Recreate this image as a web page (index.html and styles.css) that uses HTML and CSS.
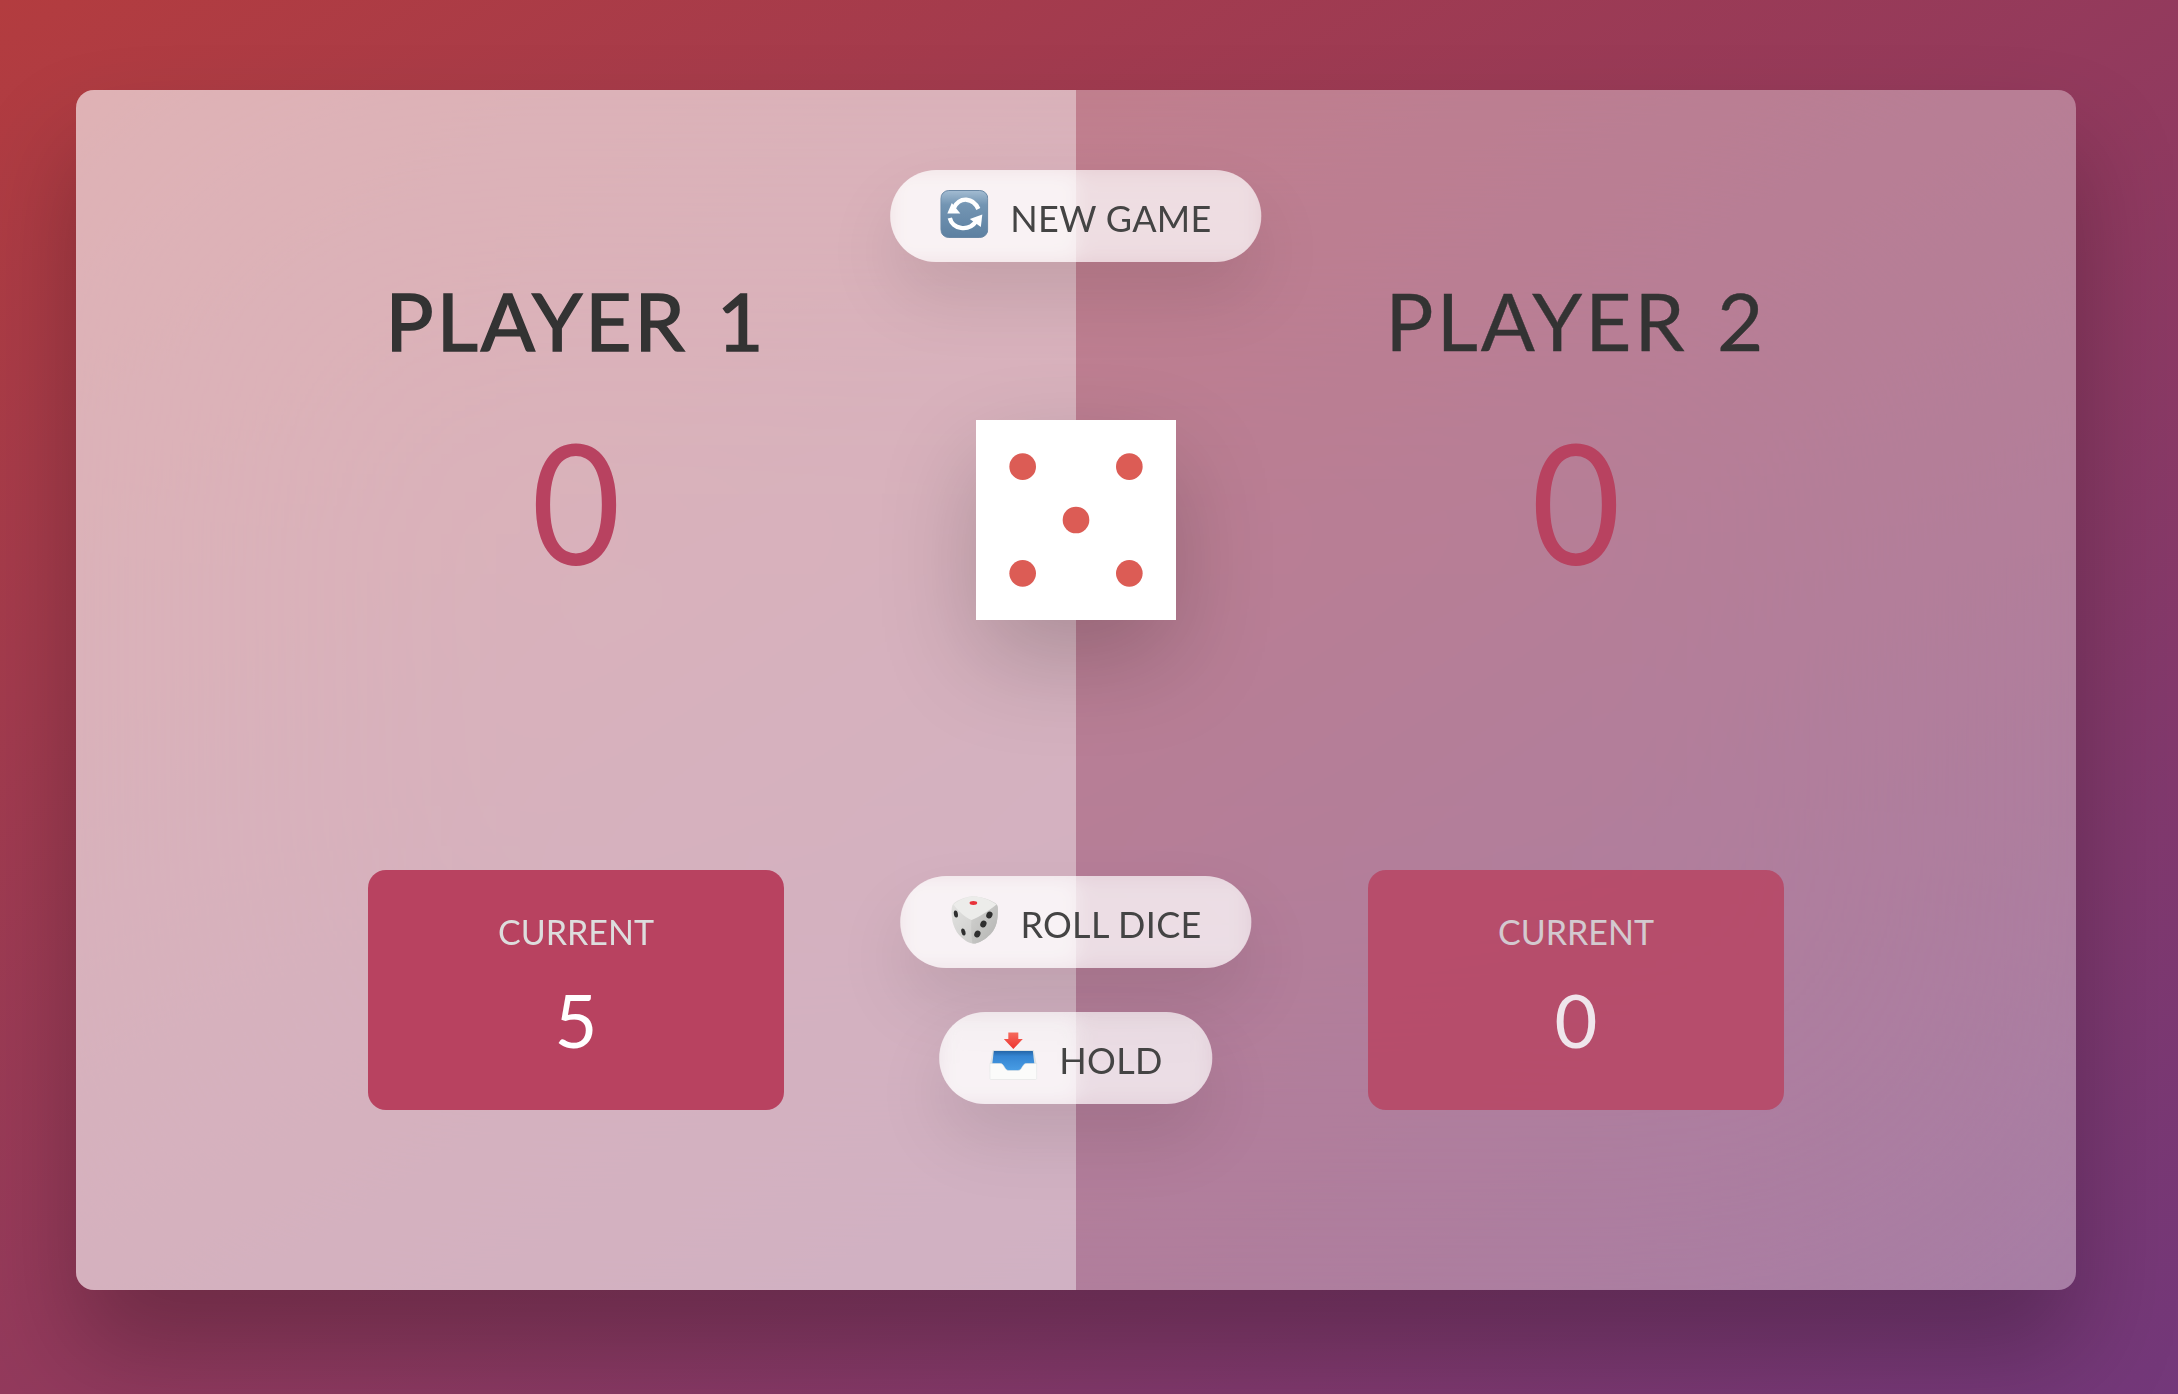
FILE: index.html
```html
<!DOCTYPE html>
<html lang="en">
<head>
  <meta charset="UTF-8" />
  <meta name="viewport" content="width=device-width, initial-scale=1.0" />
  <title>Pig Game</title>
  <link rel="stylesheet" href="styles.css">
</head>
<body>
  <main class="game">
    <section class="player player-active">
      <h2 class="name">Player 1</h2>
      <p class="score">0</p>
      <div class="current">
        <p class="current-label">Current</p>
        <p class="current-score">5</p>
      </div>
    </section>
    <section class="player">
      <h2 class="name">Player 2</h2>
      <p class="score">0</p>
      <div class="current">
        <p class="current-label">Current</p>
        <p class="current-score">0</p>
      </div>
    </section>

    <svg class="dice" viewBox="0 0 200 200" role="img" aria-label="Dice showing five">
      <rect width="200" height="200" fill="#fff" />
      <g fill="#dc5c55">
        <circle cx="46.67" cy="46.67" r="13.33" />
        <circle cx="153.33" cy="46.67" r="13.33" />
        <circle cx="100" cy="100" r="13.33" />
        <circle cx="46.67" cy="153.33" r="13.33" />
        <circle cx="153.33" cy="153.33" r="13.33" />
      </g>
    </svg>

    <button class="btn btn-new">
      <svg class="btn-icon" viewBox="0 0 48 48">
        <defs>
          <linearGradient id="refreshBg" x1="0" y1="0" x2="0" y2="1">
            <stop offset="0" stop-color="#a3bcd2" />
            <stop offset="0.3" stop-color="#7395b3" />
            <stop offset="1" stop-color="#5d80a1" />
          </linearGradient>
        </defs>
        <rect x="0.5" y="0.5" width="47" height="47" rx="8" fill="url(#refreshBg)" stroke="#6a88a5" />
        <path d="M38 19C33 7.5 19.5 6 13.5 18" fill="none" stroke="#fff" stroke-width="4.4" />
        <path d="M11.5 13L7 23.5L20 23.5Z" fill="#fff" />
        <path d="M9.5 28C12 39 28 42.5 36 31" fill="none" stroke="#fff" stroke-width="4.4" />
        <path d="M42 24.5L40.5 37L29.5 29Z" fill="#fff" />
      </svg>
      <span>New game</span>
    </button>

    <button class="btn btn-roll">
      <svg class="btn-icon" viewBox="0 0 48 48">
        <defs>
          <linearGradient id="dieLeft" x1="0" y1="0" x2="1" y2="1">
            <stop offset="0" stop-color="#e4e4e2" />
            <stop offset="1" stop-color="#c6c6c4" />
          </linearGradient>
          <linearGradient id="dieRight" x1="0" y1="0" x2="1" y2="1">
            <stop offset="0" stop-color="#d2d2d0" />
            <stop offset="1" stop-color="#b4b4b2" />
          </linearGradient>
        </defs>
        <path d="M5 6C12 2 17 0.5 23 0.5C30 0.5 38 3 44 6.5C47 8 47.5 10 47.5 14C47.5 24 46 31 42 36C37 42 31 46 25 47.5C21 48 18 47 13 43C8 39 4 34 2 25C1 19 1 14 1.5 11C2 9 3 7 5 6Z" fill="url(#dieLeft)" />
        <path d="M46 8.5C47.5 10 47.5 11 47.5 14C47.5 24 46 31 42 36C37 42 31 46 25 47.5L22 47.5C21 40 20.5 33 21 24C29 20 38 14 46 8.5Z" fill="url(#dieRight)" />
        <path d="M3 8.5C10 3 17 0.5 23 0.5C31 0.5 39 3.5 46 8.5C38 15 29 21 21 24C14 21 8 15 3 8.5Z" fill="#ececea" />
        <ellipse cx="23" cy="7" rx="3.8" ry="1.9" fill="#e8333a" />
        <g fill="#2f2f2f">
          <ellipse cx="5.5" cy="18" rx="2" ry="3.6" transform="rotate(-10 5.5 18)" />
          <ellipse cx="13" cy="36" rx="2" ry="3.6" transform="rotate(-15 13 36)" />
          <ellipse cx="39" cy="19" rx="3" ry="3.6" transform="rotate(25 39 19)" />
          <ellipse cx="33" cy="28" rx="3" ry="3.6" transform="rotate(25 33 28)" />
          <ellipse cx="27" cy="38" rx="3" ry="3.6" transform="rotate(25 27 38)" />
        </g>
      </svg>
      <span>Roll dice</span>
    </button>

    <button class="btn btn-hold">
      <svg class="btn-icon" viewBox="0 0 48 48">
        <defs>
          <linearGradient id="trayBlue" x1="0" y1="0" x2="0" y2="1">
            <stop offset="0" stop-color="#2566a8" />
            <stop offset="0.25" stop-color="#3585d2" />
            <stop offset="1" stop-color="#4a9fe6" />
          </linearGradient>
          <linearGradient id="arrowRed" x1="0" y1="0" x2="0" y2="1">
            <stop offset="0" stop-color="#f56a5c" />
            <stop offset="1" stop-color="#ee3230" />
          </linearGradient>
        </defs>
        <path d="M19 0.5H29V7H33.5L24 17L14.5 7H19Z" fill="url(#arrowRed)" />
        <path d="M3.5 18H44.5L47.5 33V40H0.5V33Z" fill="#dfe3e4" />
        <path d="M4.5 19H43.5L46 40H2Z" fill="url(#trayBlue)" />
        <path d="M0.5 31.5H11C15 31.5 15 38.5 19.5 38.5H28.5C33 38.5 33 31.5 37 31.5H47.5V46C47.5 47 47 47.5 46 47.5H2C1 47.5 0.5 47 0.5 46Z" fill="#fbfbfa" stroke="#dfe2e2" stroke-width="0.6" />
      </svg>
      <span>Hold</span>
    </button>
  </main>
</body>
</html>
```

FILE: styles.css
```css
* {
  margin: 0;
  padding: 0;
  box-sizing: border-box;
}

body {
  height: 100vh;
  overflow: hidden;
  padding: 90px 0 0 76px;
  font-family: Lato, "Noto Sans", sans-serif;
  background-image: linear-gradient(to top left, #73387a 0%, #b33c3f 100%);
  color: #333;
}

.game {
  position: relative;
  display: flex;
  width: 2000px;
  height: 1200px;
  overflow: hidden;
  border-radius: 18px;
  background: rgba(255, 255, 255, 0.35);
  backdrop-filter: blur(200px);
  box-shadow: 0 60px 100px rgba(0, 0, 0, 0.25);
}

.player {
  flex: 1;
  display: flex;
  flex-direction: column;
  align-items: center;
  padding: 180px;
}

.player-active {
  background: rgba(255, 255, 255, 0.4);
}

.name {
  margin-bottom: 29px;
  font-size: 80px;
  line-height: 100px;
  font-weight: 400;
  letter-spacing: 3px;
  word-spacing: 6px;
  text-transform: uppercase;
  -webkit-text-stroke: 0.4px #333;
}

.player-active .name {
  -webkit-text-stroke: 1.6px #333;
}

.score {
  font-size: 166px;
  line-height: 204px;
  font-weight: 400;
  color: #b84260;
  transform: scaleX(0.93);
}

.current {
  width: 416px;
  height: 240px;
  margin-top: auto;
  padding: 40px;
  border-radius: 18px;
  background: #b84260;
  color: #fff;
  text-align: center;
  opacity: 0.8;
}

.player-active .current {
  opacity: 1;
}

.current-label {
  margin-bottom: 20px;
  font-size: 34px;
  line-height: 44px;
  color: #ddd;
  text-transform: uppercase;
}

.current-score {
  font-size: 74px;
  line-height: 92px;
}

.dice {
  position: absolute;
  left: 50%;
  top: 330px;
  width: 200px;
  height: 200px;
  transform: translateX(-50%);
  box-shadow: 0 40px 100px rgba(0, 0, 0, 0.2);
}

.btn {
  position: absolute;
  left: 50%;
  display: flex;
  align-items: center;
  gap: 22px;
  padding: 16px 50px 12px;
  transform: translateX(-50%);
  border: none;
  border-radius: 1000px;
  font-family: inherit;
  font-size: 36px;
  line-height: 64px;
  letter-spacing: 0.3px;
  white-space: nowrap;
  text-transform: uppercase;
  color: #444;
  background: rgba(255, 255, 255, 0.6);
  backdrop-filter: blur(10px);
  box-shadow: 0 35px 70px rgba(0, 0, 0, 0.1);
  cursor: pointer;
}

.btn-icon {
  width: 48px;
  height: 48px;
  margin-bottom: 8px;
}

.btn-new {
  top: 80px;
}

.btn-roll {
  top: 786px;
}

.btn-hold {
  top: 922px;
}
```
